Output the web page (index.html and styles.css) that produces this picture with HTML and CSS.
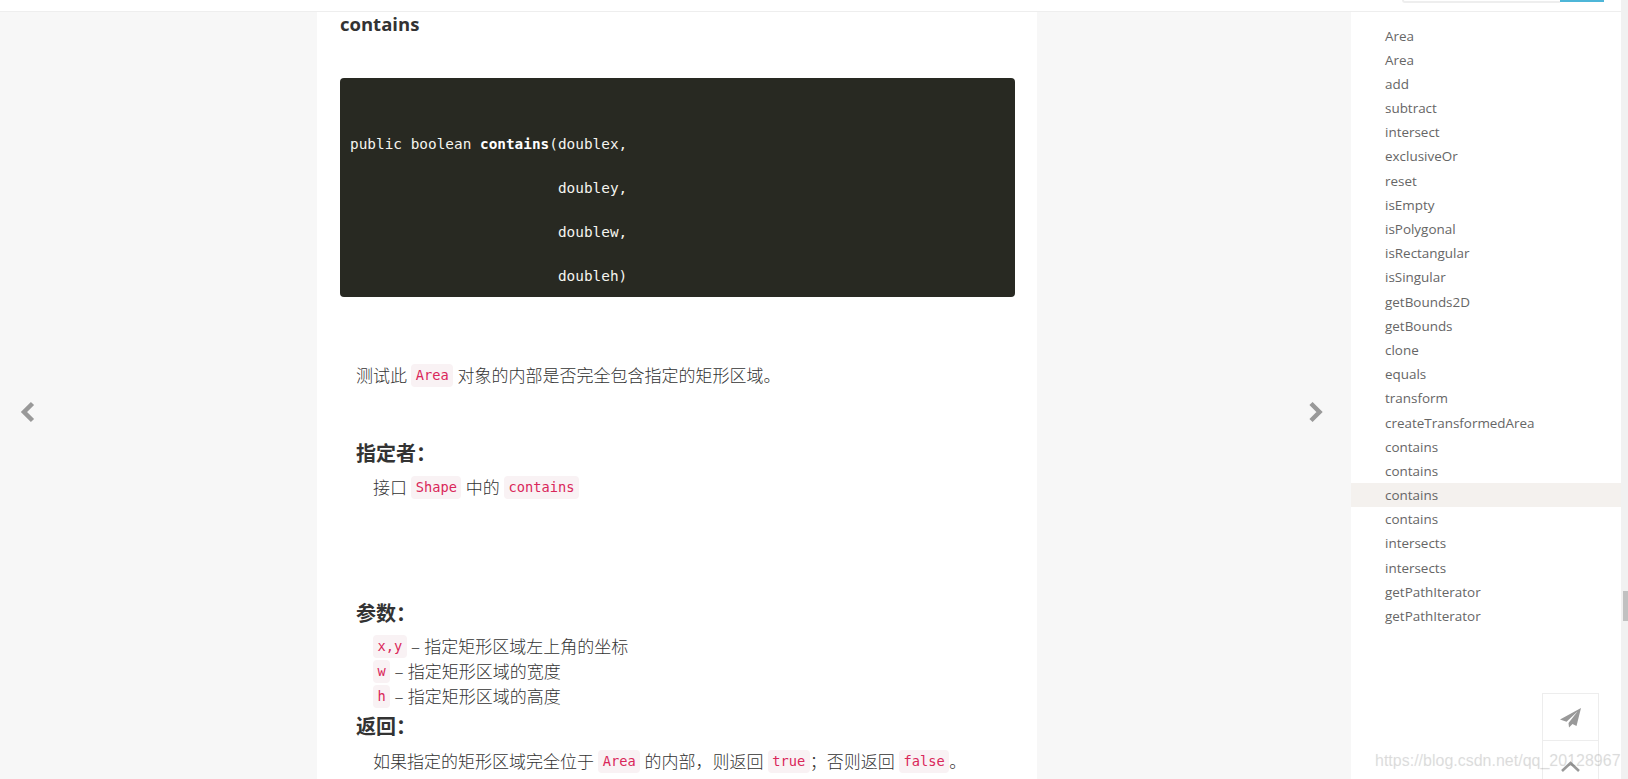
FILE: index.html
```html
<!DOCTYPE html>
<html lang="zh-CN">
<head>
<meta charset="utf-8">
<title>contains</title>
<link rel="stylesheet" href="styles.css">
</head>
<body>
<header class="topbar">
  <div class="search"><div class="search-input"></div><div class="search-btn"></div></div>
</header>
<div class="page">
  <main class="article">
    <h3 class="title">contains</h3>
    <pre class="code">public boolean <b>contains</b>(doublex,
                        doubley,
                        doublew,
                        doubleh)</pre>
    <div class="desc">
      <p class="lead">测试此 <code>Area</code> 对象的内部是否完全包含指定的矩形区域。</p>
      <h4 class="spec">指定者：</h4>
      <p class="ind">接口 <code>Shape</code> 中的 <code>contains</code></p>
      <h4 class="params">参数：</h4>
      <p class="ind row-first"><code>x,y</code> – 指定矩形区域左上角的坐标</p>
      <p class="ind"><code>w</code> – 指定矩形区域的宽度</p>
      <p class="ind"><code>h</code> – 指定矩形区域的高度</p>
      <h4 class="ret">返回：</h4>
      <p class="ind ret-text">如果指定的矩形区域完全位于 <code>Area</code> 的内部，则返回 <code>true</code>；否则返回 <code>false</code>。</p>
    </div>
  </main>
  <aside class="side">
    <ul class="toc">
      <li>Area</li><li>Area</li><li>add</li><li>subtract</li><li>intersect</li><li>exclusiveOr</li><li>reset</li><li>isEmpty</li><li>isPolygonal</li><li>isRectangular</li><li>isSingular</li><li>getBounds2D</li><li>getBounds</li><li>clone</li><li>equals</li><li>transform</li><li>createTransformedArea</li><li>contains</li><li>contains</li><li class="active">contains</li><li>contains</li><li>intersects</li><li>intersects</li><li>getPathIterator</li><li>getPathIterator</li>
    </ul>
  </aside>
</div>
<svg class="nav nav-prev" viewBox="0 0 15 22" aria-hidden="true"><path d="M12.500 2.500 4 11l8.500 8.500" fill="none" stroke="#999" stroke-width="4.500"/></svg>
<svg class="nav nav-next" viewBox="0 0 15 22" aria-hidden="true"><path d="M3 2.500 11.500 11 3 19.500" fill="none" stroke="#999" stroke-width="4.500"/></svg>
<div class="float-tools">
  <div class="tool tool-send">
    <svg viewBox="0 0 21 20" width="21" height="20" aria-hidden="true"><path d="M21 0 0 11.500 6.500 13.800 17.500 3.500 8.500 15 9 19.500 12.500 16 16.500 18Z" fill="#999"/></svg>
  </div>
  <div class="tool tool-up">
    <svg viewBox="0 0 19 11" width="19" height="11" aria-hidden="true"><path d="M1 10 9.500 2 18 10" fill="none" stroke="#999" stroke-width="2.600"/></svg>
  </div>
</div>
<div class="watermark">https://blog.csdn.net/qq_20128967</div>
<div class="scrollbar"><div class="scroll-thumb"></div></div>
</body>
</html>
```
FILE: styles.css
```css
* { box-sizing: border-box; }
html, body { margin: 0; padding: 0; height: 100%; overflow: hidden; }
body {
  background: #f7f7f7;
  color: #333;
  font-family: "Noto Sans CJK SC", "Open Sans", sans-serif;
  font-weight: 300;
  font-size: 17px;
}
.topbar {
  height: 12px;
  margin-right: 7px;
  background: #fff;
  border-bottom: 1px solid #eee;
  display: flex;
  justify-content: flex-end;
  padding-right: 17px;
}
.search { display: flex; height: 3px; }
.search-input { width: 158px; border: 2px solid #eee; border-top: 0; border-right: 0; border-radius: 0 0 0 4px; }
.search-btn { width: 44px; height: 2px; background: #4eb6d8; }
.page {
  display: flex;
  padding-left: 317px;
  padding-right: 7px;
  height: 767px;
}
.article {
  width: 720px;
  background: #fff;
  padding-left: 23px;
  padding-right: 22px;
  overflow: hidden;
}
.title {
  margin: 0;
  font-family: "Open Sans", sans-serif;
  font-size: 18.5px;
  font-weight: 700;
  line-height: 24px;
  color: #333;
}
.code {
  margin: 42px 0 0;
  height: 219px;
  padding: 44px 10px 0;
  background: #282922;
  border-radius: 4px;
  color: #f5f5ef;
  font-family: "DejaVu Sans Mono", monospace;
  font-size: 14.4px;
  font-weight: 400;
  line-height: 44px;
  overflow: hidden;
}
.code b { font-weight: 700; color: #fff; }
.desc { margin-left: 16px; }
p { margin: 0; line-height: 25px; white-space: nowrap; word-spacing: 0.5px; }
code {
  display: inline-block;
  padding: 0 4.500px;
  height: 23px;
  line-height: 23px;
  background: #f9f2f4;
  border-radius: 4px;
  color: #d9275a;
  font-family: "DejaVu Sans Mono", monospace;
  font-size: 13.7px;
  font-weight: 400;
  vertical-align: top;
  margin-top: 2px;
}
.lead { margin-top: 65px; }
h4 {
  margin: 0;
  font-size: 20px;
  font-weight: 700;
  line-height: 26px;
  color: #333;
}
.spec { margin-top: 53px; }
.ind { margin-left: 17px; }
.spec + .ind { margin-top: 8px; }
.params { margin-top: 101px; }
.row-first { margin-top: 7px; }
.ret { margin-top: 5px; }
.ret-text { margin-top: 9px; }
.side {
  margin-left: 314px;
  width: 270px;
  background: #fff;
  padding-top: 11.5px;
}
.toc {
  list-style: none;
  margin: 0;
  padding: 0;
  font-family: "Open Sans", sans-serif;
  font-size: 13.45px;
  font-weight: 400;
  color: #666;
}
.toc li {
  height: 24.2px;
  line-height: 24.2px;
  padding-left: 34px;
}
.toc .active { background: #f4f1ee; }
.nav { position: absolute; top: 401px; width: 15px; height: 22px; }
.nav-prev { left: 20px; }
.nav-next { left: 1308px; }
.float-tools {
  position: absolute;
  left: 1542px;
  top: 693px;
  width: 57px;
  height: 100px;
  background: #fff;
  border: 1px solid #ededed;
}
.tool { display: flex; justify-content: center; padding-right: 1px; }
.tool-send { height: 47px; padding-top: 14px; border-bottom: 1px solid #ededed; }
.tool-up { padding-top: 20px; }
.watermark {
  position: absolute;
  left: 1375px;
  top: 750px;
  font-family: "Liberation Sans", sans-serif;
  font-size: 16px;
  font-weight: 400;
  line-height: 22px;
  color: rgba(140, 140, 140, 0.2);
  text-shadow: 0 0 1px rgba(0, 0, 0, 0.08);
  white-space: nowrap;
}
.scrollbar {
  position: absolute;
  left: 1621px;
  top: 0;
  width: 7px;
  height: 779px;
  background: #f1f1f1;
}
.scroll-thumb {
  position: absolute;
  left: 2px;
  top: 591px;
  width: 5px;
  height: 30px;
  background: #c1c1c1;
}
```
